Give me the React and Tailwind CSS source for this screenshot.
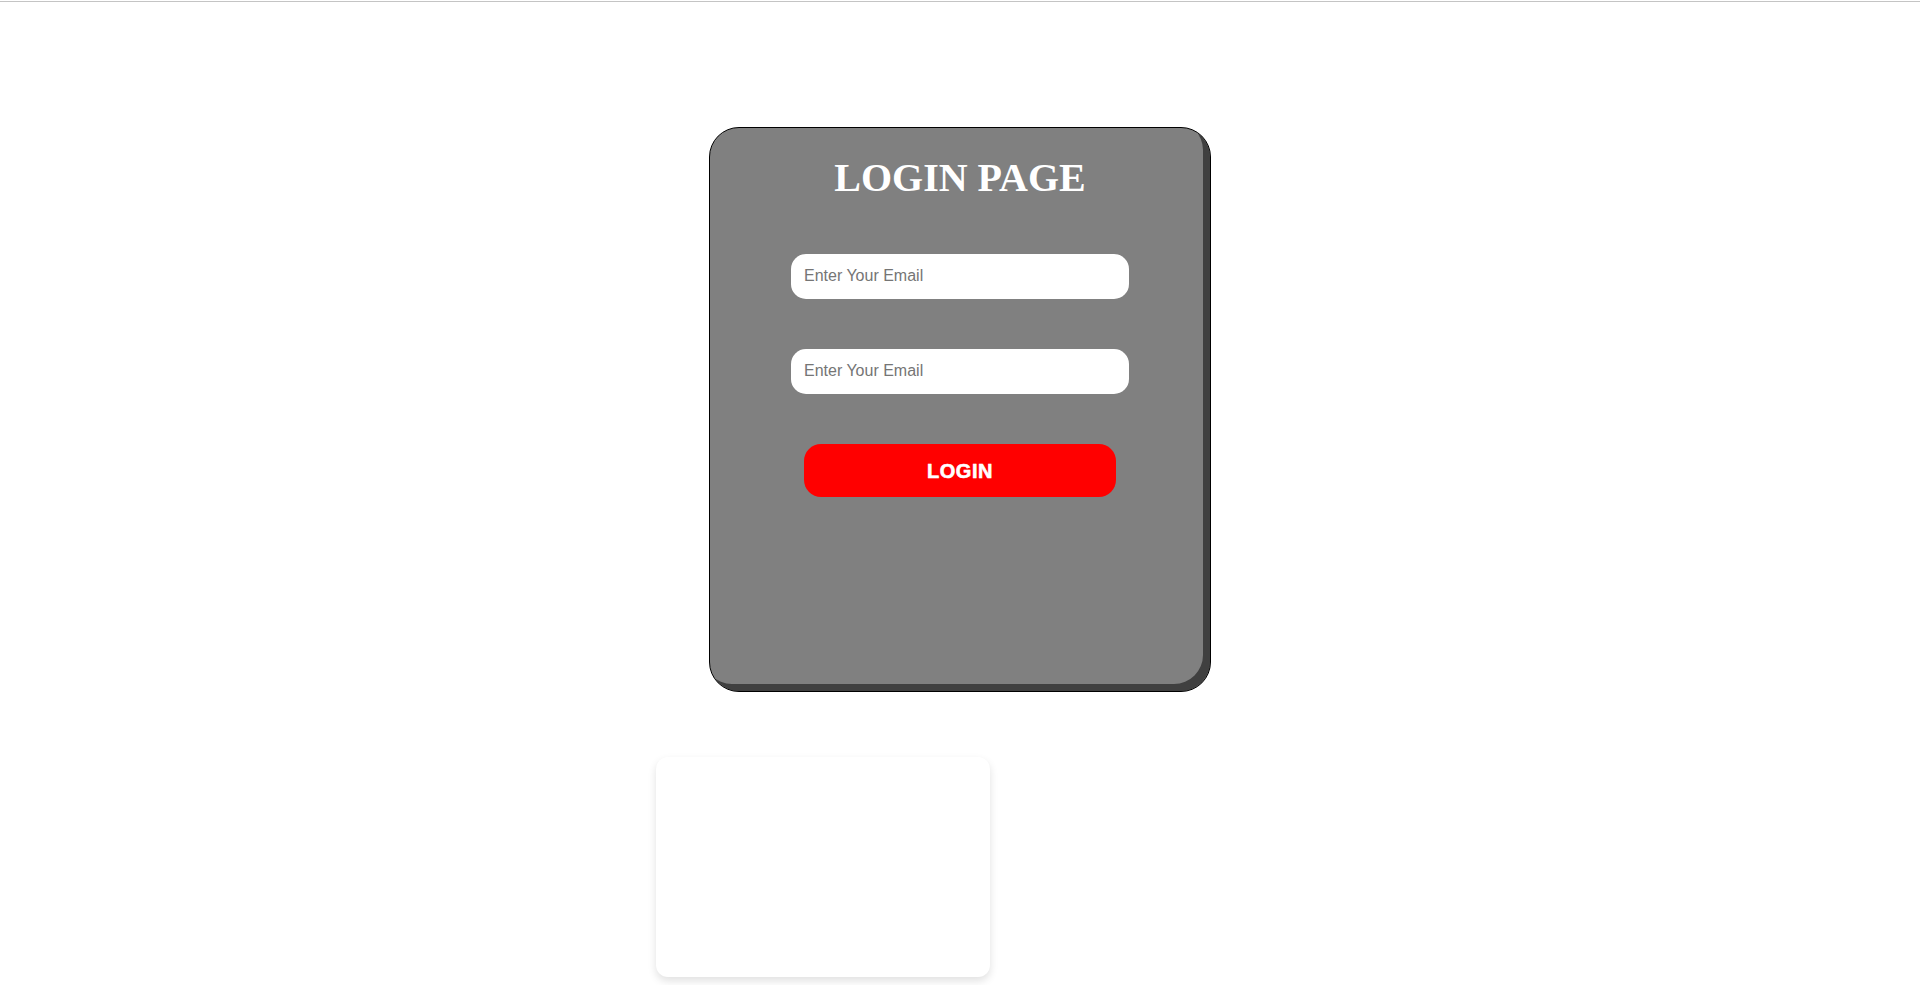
import { useState } from 'react';

const LoginPage = () => {
  const [formData, setFormData] = useState({ email: '', password: '' });

  const handleInputChange = (e) => {
    setFormData({ ...formData, [e.target.name]: e.target.value });
  };

  const handleSubmit = (e) => {
    e.preventDefault();
  };

  const inputClassName =
    "w-[338px] h-[45px] rounded-[15px] bg-white px-[13px] pb-[2px] text-[16px] text-black placeholder:text-[#757575] outline-none font-['Liberation_Sans',Arial,sans-serif]";

  return (
    <div className="min-h-screen w-full bg-white overflow-hidden">
      <div className="mt-px h-px w-full bg-[#c4c4c4]" />

      <div className="flex flex-col items-center">
        {/* Login card */}
        <form
          onSubmit={handleSubmit}
          className="mt-[125px] w-[502px] h-[565px] flex flex-col items-center rounded-[30px] border border-black bg-[#808080] pt-[27px] shadow-[inset_-7px_-7px_0_#404040]"
        >
          <h1 className="text-[40px] leading-[46px] font-bold text-white font-['Liberation_Serif','Times_New_Roman',serif]">
            LOGIN PAGE
          </h1>

          <input
            name="email"
            type="email"
            placeholder="Enter Your Email"
            value={formData.email}
            onChange={handleInputChange}
            className={`mt-[53px] ${inputClassName}`}
          />
          <input
            name="password"
            type="password"
            placeholder="Enter Your Email"
            value={formData.password}
            onChange={handleInputChange}
            className={`mt-[50px] ${inputClassName}`}
          />

          <button
            type="submit"
            className="mt-[50px] w-[312px] h-[53px] rounded-[17px] bg-[#ff0000] text-[20px] font-bold tracking-[0.5px] text-white [-webkit-text-stroke:0.6px_white] font-['Liberation_Sans',Arial,sans-serif]"
          >
            LOGIN
          </button>
        </form>

        {/* Empty panel under the card */}
        <div className="self-start ml-[656px] mt-[65px] w-[334px] h-[220px] rounded-xl bg-white shadow-[0_4px_8px_rgba(0,0,0,0.12)]" />
      </div>
    </div>
  );
};

export default LoginPage;
